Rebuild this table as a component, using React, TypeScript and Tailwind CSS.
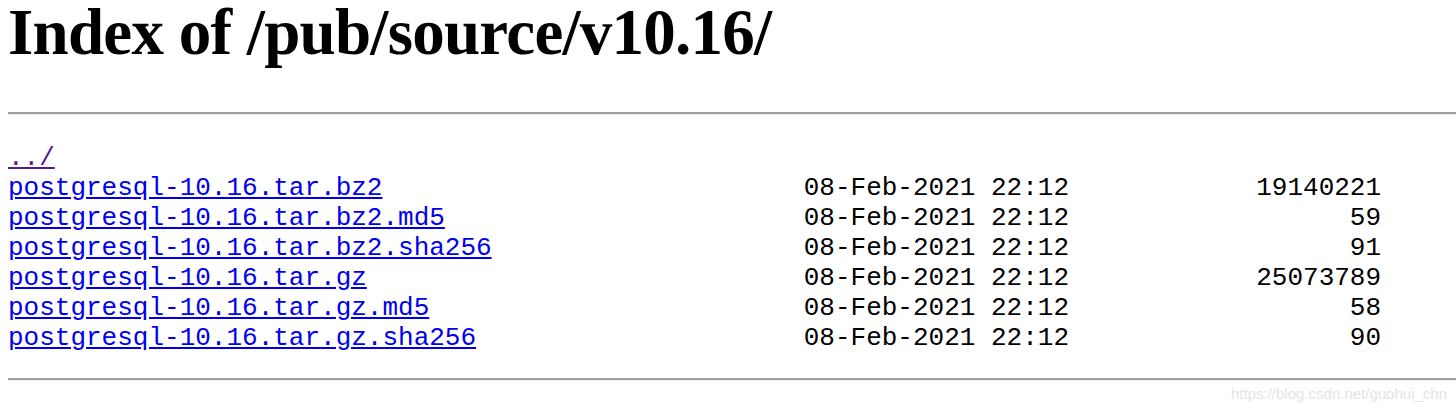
const files = [
  { name: 'postgresql-10.16.tar.bz2', size: '19140221' },
  { name: 'postgresql-10.16.tar.bz2.md5', size: '59' },
  { name: 'postgresql-10.16.tar.bz2.sha256', size: '91' },
  { name: 'postgresql-10.16.tar.gz', size: '25073789' },
  { name: 'postgresql-10.16.tar.gz.md5', size: '58' },
  { name: 'postgresql-10.16.tar.gz.sha256', size: '90' },
];

const DATE = '08-Feb-2021 22:12';

function Rule() {
  return <div className="ml-2 h-[3px] border-t-2 border-b border-t-[#9e9e9e] border-b-[#ececec]" />;
}

export default function App() {
  return (
    <div className="relative w-[1456px] h-[410px] bg-white text-black">
      <h1 className="ml-2 text-[65px] leading-[64px] font-bold font-['Liberation_Serif',serif] tracking-[-0.75px]">
        Index of /pub/source/v10.16/
      </h1>

      <div className="mt-[48px]">
        <Rule />
      </div>

      <pre className="ml-2 mt-[28px] text-[26px] leading-[30px] font-['Liberation_Mono',monospace]">
        <a href="#" className="underline text-[#551a8b]">../</a>
        {'\n'}
        {files.map(f => (
          <span key={f.name}>
            <a href="#" className="underline text-[#0000ee]">{f.name}</a>
            {' '.repeat(51 - f.name.length)}
            {DATE}
            {f.size.padStart(20, ' ')}
            {'\n'}
          </span>
        ))}
      </pre>

      <div className="mt-[25px]">
        <Rule />
      </div>

      <span className="absolute right-[9px] top-[383px] text-[15px] text-[#e4e4e4] font-['Liberation_Sans',sans-serif]">
        https://blog.csdn.net/guohui_chn
      </span>
    </div>
  );
}
